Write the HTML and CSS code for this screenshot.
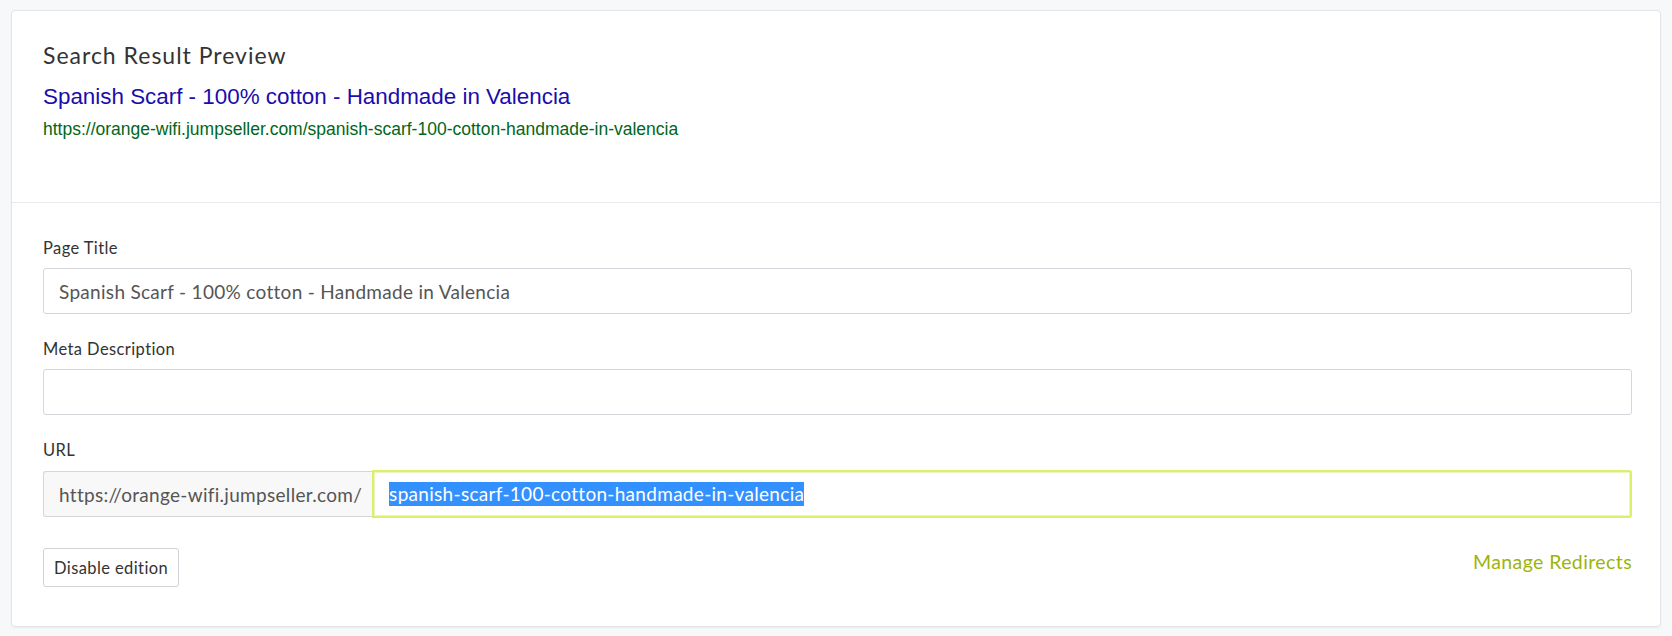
FILE: index.html
```html
<!DOCTYPE html>
<html lang="en">
<head>
<meta charset="utf-8">
<title>SEO</title>
<link rel="stylesheet" href="styles.css">
</head>
<body>
<div class="card">
  <section class="preview">
    <h2 class="preview-heading">Search Result Preview</h2>
    <a class="serp-title" href="#">Spanish Scarf - 100% cotton - Handmade in Valencia</a>
    <div class="serp-url">https://orange-wifi.jumpseller.com/spanish-scarf-100-cotton-handmade-in-valencia</div>
  </section>
  <section class="form">
    <div class="field">
      <label class="label">Page Title</label>
      <div class="input">Spanish Scarf - 100% cotton - Handmade in Valencia</div>
    </div>
    <div class="field">
      <label class="label">Meta Description</label>
      <div class="input"></div>
    </div>
    <div class="field">
      <label class="label">URL</label>
      <div class="input-group">
        <span class="addon">https://orange-wifi.jumpseller.com/</span>
        <div class="input focus"><span class="selected">spanish-scarf-100-cotton-handmade-in-valencia</span></div>
      </div>
    </div>
    <div class="actions">
      <button class="btn">Disable edition</button>
      <a class="manage" href="#">Manage Redirects</a>
    </div>
  </section>
</div>
</body>
</html>
```

FILE: styles.css
```css
* { box-sizing: border-box; }
html, body { margin: 0; padding: 0; }
body {
  background: #f7f8fa;
  padding: 10px 11px 9px 11px;
  font-family: Lato, "Open Sans", sans-serif;
  color: #333;
}
.card {
  background: #fff;
  border: 1px solid #e3e5e8;
  border-radius: 4px;
  box-shadow: 0 1px 2px rgba(0,0,0,0.06);
  height: 617px;
}
.preview {
  padding: 31px 28px 0 31px;
  height: 192px;
  border-bottom: 1px solid #e8e9ec;
}
.preview-heading {
  margin: 0;
  font-size: 23px;
  letter-spacing: 1px;
  font-weight: 400;
  line-height: 26px;
  color: #333;
}
.serp-title {
  display: block;
  margin-top: 16px;
  font-family: "Liberation Sans", Arial, sans-serif;
  font-size: 22.4px;
  line-height: 26px;
  color: #1a0dab;
  text-decoration: none;
}
.serp-url {
  margin-top: 9px;
  font-family: "Liberation Sans", Arial, sans-serif;
  font-size: 17.5px;
  line-height: 20px;
  color: #006621;
}
.form {
  padding: 35px 28px 0 31px;
}
.field {
  display: flex;
  flex-direction: column;
  gap: 10px;
  margin-bottom: 25px;
}
.label {
  font-size: 16.5px;
  letter-spacing: 0.4px;
  line-height: 20px;
  color: #333;
}
.input {
  height: 46px;
  border: 1px solid #d3d6db;
  border-radius: 3px;
  padding: 0 15px;
  display: flex;
  align-items: center;
  font-size: 19px;
  letter-spacing: 0.3px;
  color: #555;
  background: #fff;
}
.input-group {
  display: flex;
  height: 48px;
}
.addon {
  flex: none;
  display: flex;
  align-items: center;
  white-space: nowrap;
  padding: 0 10px 0 15px;
  background: #f8f8f8;
  border: 1px solid #d3d6db;
  border-right: 0;
  border-radius: 3px 0 0 3px;
  font-size: 19px;
  letter-spacing: 0.3px;
  color: #555;
  margin: 1px 0;
}
.input.focus {
  flex: 1;
  height: 48px;
  border: 2px solid #dcee6a;
  box-shadow: 0 0 0 1px #eef5c4 inset;
  border-radius: 0 3px 3px 0;
  padding-left: 15px;
}
.selected {
  background: #3390ff;
  color: #fff;
  line-height: 24px;
  white-space: nowrap;
}
.actions {
  display: flex;
  justify-content: space-between;
  align-items: flex-start;
  margin-top: 30px;
}
.btn {
  font-family: Lato, "Open Sans", sans-serif;
  font-size: 16.5px;
  letter-spacing: 0.4px;
  color: #333;
  background: #fff;
  border: 1px solid #cfd2d6;
  border-radius: 3px;
  height: 39px;
  padding: 0 10px;
  cursor: pointer;
}
.manage {
  margin-top: 2px;
  font-size: 19.5px;
  line-height: 24px;
  letter-spacing: 0.4px;
  color: #9cb40e;
  text-decoration: none;
}
```
